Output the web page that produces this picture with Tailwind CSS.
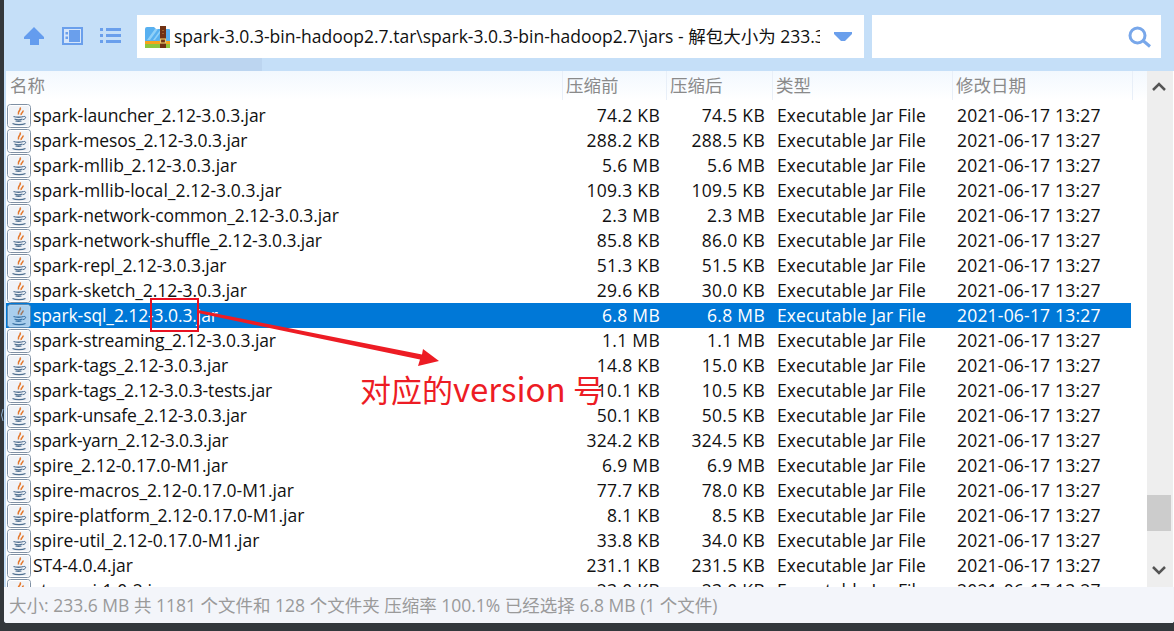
<!DOCTYPE html>
<html><head><meta charset="utf-8"><script src="https://cdn.jsdelivr.net/npm/@tailwindcss/browser@4"></script></head>
<body class="m-0 h-[631px] w-[1174px] overflow-hidden bg-[#33373b] font-['Open_Sans','Noto_Sans_CJK_SC',sans-serif] text-[17.5px]">
<svg class="hidden"><defs>
<symbol id="jar" viewBox="0 0 24 24"><rect x="0.5" y="0.5" width="23" height="23" rx="3" fill="#f1f3f7" stroke="#7f90a4"/><rect x="1.500" y="1.500" width="21" height="21" rx="2" fill="none" stroke="#ffffff"/><path d="M13 3.500c2 2.500-3 3.500-1.500 7M16 6.500c.5 2-2.500 2.500-1.800 4.500" stroke="#e4772b" stroke-width="1.600" fill="none"/><path d="M6.500 12.500c2 1 8 1 10 0M7.500 15c2 .8 6 .8 8 0M8.500 17c2 .6 4 .6 6 0M5.500 19.500c3 1.500 10 1.500 13 0" stroke="#4f6f90" stroke-width="1.300" fill="none"/><path d="M16.500 12.500c3-.8 3 2.500-.8 3.200" stroke="#4f6f90" fill="none"/></symbol>
</defs></svg>
<div class="relative ml-[4px] h-[623px] w-[1170px] overflow-hidden rounded-b-[3px] bg-[#c5dff8] pl-[2px]">
 <div class="absolute left-[176px] top-[58px] h-[13px] w-[82px] bg-[#bcd5f0]"></div>
 <div class="relative flex h-[71px] items-start">
  <div class="flex w-[131px] items-center gap-[17px] pl-[17px] pt-[27px]">
   <svg width="22" height="18" viewBox="0 0 22 18"><path d="M11 0 21 10v2h-5v6H7v-6H1v-2z" fill="#649cee"/></svg>
   <svg width="21" height="18" viewBox="0 0 21 18"><rect x="1" y="1" width="19" height="16" fill="#d5e5fa" stroke="#6a9fec" stroke-width="2"/><rect x="7" y="3" width="11" height="12" fill="#6a9fec"/><rect x="3.500" y="5" width="2.500" height="2.500" fill="#6a9fec"/><rect x="3.500" y="9.500" width="2.500" height="2.500" fill="#6a9fec"/></svg>
   <svg width="21" height="16" viewBox="0 0 21 16"><g fill="#6a9fec"><rect x="0" y="0" width="3" height="3"/><rect x="6" y="0" width="15" height="3"/><rect x="0" y="6" width="3" height="3"/><rect x="6" y="6" width="15" height="3"/><rect x="0" y="12" width="3" height="3"/><rect x="6" y="12" width="15" height="3"/></g></svg>
  </div>
  <div class="mt-[15px] flex h-[43px] w-[727px] items-center bg-white pl-[8px]">
   <svg width="25" height="22" viewBox="0 0 25 22" class="shrink-0"><path d="M0 3q0-2 2-2h7l2 2h13q1 0 1 1v11H0z" fill="#58b0f0"/><path d="M2 14 10 3h3L5 14zM8 14 16 3h2l-8 11z" fill="#8fd0f8"/><path d="M0 15h25v3H0z" fill="#f7a21b"/><path d="M0 18h25v4H0z" fill="#8cc63f"/><rect x="15" y="0" width="6" height="22" fill="#713214"/><rect x="15.500" y="13" width="5" height="4" fill="none" stroke="#e8c46a" stroke-width="1.200"/><path d="M18 4v6" stroke="#c9924a" stroke-dasharray="1 2"/></svg>
   <div class="ml-[4px] w-[646px] shrink-0 overflow-hidden whitespace-nowrap text-[#111]">spark-3.0.3-bin-hadoop2.7.tar\spark-3.0.3-bin-hadoop2.7\jars - 解包大小为 233.3 MB</div>
   <svg width="18" height="9" viewBox="0 0 18 9" class="ml-[14px]"><path d="M0 0h18v2l-7 7H7L0 2z" fill="#6a9fec"/></svg>
  </div>
  <div class="ml-[8px] mt-[15px] flex h-[43px] w-[289px] items-center justify-end bg-white pr-[9px]">
   <svg width="24" height="22" viewBox="0 0 24 22" fill="none" stroke="#78a7ea"><circle cx="9.500" cy="9.500" r="7.500" stroke-width="3"/><path d="M15.500 15 22 20.500" stroke-width="3"/></svg>
  </div>
 </div>
 <div class="relative flex h-[552px] bg-white">
  <div class="flex w-[1141px] flex-col">
   <div class="flex h-[29px] items-center bg-gradient-to-b from-[#f2f8fe] to-[#ffffff] text-[#8a8a8a]">
    <div class="h-full w-[557px] border-r border-[#e8eff8] pl-[4px] leading-[29px]">名称</div>
    <div class="h-full w-[104px] border-r border-[#e8eff8] pl-[3px] leading-[29px]">压缩前</div>
    <div class="h-full w-[106px] border-r border-[#e8eff8] pl-[3px] leading-[29px]">压缩后</div>
    <div class="h-full w-[180px] border-r border-[#e8eff8] pl-[3px] leading-[29px]">类型</div>
    <div class="h-full w-[180px] border-r border-[#e8eff8] pl-[3px] leading-[29px]">修改日期</div>
   </div>
   <div class="mt-[3px] flex h-[484px] w-[1125px] flex-col overflow-hidden text-[#111]">
    <div class="flex h-[25px] shrink-0 items-center"><svg width="24" height="24" class="ml-[1px] shrink-0"><use href="#jar"/></svg><span class="ml-[2px] w-[532px] tracking-[-0.1px]">spark-launcher_2.12-3.0.3.jar</span><span class="w-[95px] text-right tracking-[0.3px]">74.2 KB</span><span class="w-[105px] text-right tracking-[0.3px]">74.5 KB</span><span class="ml-[12px] w-[180px] tracking-[0.1px]">Executable Jar File</span><span class="tracking-[0.2px]">2021-06-17 13:27</span></div>
    <div class="flex h-[25px] shrink-0 items-center"><svg width="24" height="24" class="ml-[1px] shrink-0"><use href="#jar"/></svg><span class="ml-[2px] w-[532px] tracking-[-0.1px]">spark-mesos_2.12-3.0.3.jar</span><span class="w-[95px] text-right tracking-[0.3px]">288.2 KB</span><span class="w-[105px] text-right tracking-[0.3px]">288.5 KB</span><span class="ml-[12px] w-[180px] tracking-[0.1px]">Executable Jar File</span><span class="tracking-[0.2px]">2021-06-17 13:27</span></div>
    <div class="flex h-[25px] shrink-0 items-center"><svg width="24" height="24" class="ml-[1px] shrink-0"><use href="#jar"/></svg><span class="ml-[2px] w-[532px]">spark-mllib_2.12-3.0.3.jar</span><span class="w-[95px] text-right tracking-[0.3px]">5.6 MB</span><span class="w-[105px] text-right tracking-[0.3px]">5.6 MB</span><span class="ml-[12px] w-[180px] tracking-[0.1px]">Executable Jar File</span><span class="tracking-[0.2px]">2021-06-17 13:27</span></div>
    <div class="flex h-[25px] shrink-0 items-center"><svg width="24" height="24" class="ml-[1px] shrink-0"><use href="#jar"/></svg><span class="ml-[2px] w-[532px] tracking-[0.05px]">spark-mllib-local_2.12-3.0.3.jar</span><span class="w-[95px] text-right tracking-[0.3px]">109.3 KB</span><span class="w-[105px] text-right tracking-[0.3px]">109.5 KB</span><span class="ml-[12px] w-[180px] tracking-[0.1px]">Executable Jar File</span><span class="tracking-[0.2px]">2021-06-17 13:27</span></div>
    <div class="flex h-[25px] shrink-0 items-center"><svg width="24" height="24" class="ml-[1px] shrink-0"><use href="#jar"/></svg><span class="ml-[2px] w-[532px] tracking-[-0.1px]">spark-network-common_2.12-3.0.3.jar</span><span class="w-[95px] text-right tracking-[0.3px]">2.3 MB</span><span class="w-[105px] text-right tracking-[0.3px]">2.3 MB</span><span class="ml-[12px] w-[180px] tracking-[0.1px]">Executable Jar File</span><span class="tracking-[0.2px]">2021-06-17 13:27</span></div>
    <div class="flex h-[25px] shrink-0 items-center"><svg width="24" height="24" class="ml-[1px] shrink-0"><use href="#jar"/></svg><span class="ml-[2px] w-[532px] tracking-[-0.1px]">spark-network-shuffle_2.12-3.0.3.jar</span><span class="w-[95px] text-right tracking-[0.3px]">85.8 KB</span><span class="w-[105px] text-right tracking-[0.3px]">86.0 KB</span><span class="ml-[12px] w-[180px] tracking-[0.1px]">Executable Jar File</span><span class="tracking-[0.2px]">2021-06-17 13:27</span></div>
    <div class="flex h-[25px] shrink-0 items-center"><svg width="24" height="24" class="ml-[1px] shrink-0"><use href="#jar"/></svg><span class="ml-[2px] w-[532px] tracking-[-0.1px]">spark-repl_2.12-3.0.3.jar</span><span class="w-[95px] text-right tracking-[0.3px]">51.3 KB</span><span class="w-[105px] text-right tracking-[0.3px]">51.5 KB</span><span class="ml-[12px] w-[180px] tracking-[0.1px]">Executable Jar File</span><span class="tracking-[0.2px]">2021-06-17 13:27</span></div>
    <div class="flex h-[25px] shrink-0 items-center"><svg width="24" height="24" class="ml-[1px] shrink-0"><use href="#jar"/></svg><span class="ml-[2px] w-[532px] tracking-[-0.1px]">spark-sketch_2.12-3.0.3.jar</span><span class="w-[95px] text-right tracking-[0.3px]">29.6 KB</span><span class="w-[105px] text-right tracking-[0.3px]">30.0 KB</span><span class="ml-[12px] w-[180px] tracking-[0.1px]">Executable Jar File</span><span class="tracking-[0.2px]">2021-06-17 13:27</span></div>
    <div class="flex h-[25px] shrink-0 items-center bg-[#0078d7] text-white"><svg width="24" height="24" class="ml-[1px] shrink-0 opacity-70"><use href="#jar"/></svg><span class="ml-[2px] w-[532px] tracking-[-0.1px]">spark-sql_2.12-3.0.3.jar</span><span class="w-[95px] text-right tracking-[0.3px]">6.8 MB</span><span class="w-[105px] text-right tracking-[0.3px]">6.8 MB</span><span class="ml-[12px] w-[180px] tracking-[0.1px]">Executable Jar File</span><span class="tracking-[0.2px]">2021-06-17 13:27</span></div>
    <div class="flex h-[25px] shrink-0 items-center"><svg width="24" height="24" class="ml-[1px] shrink-0"><use href="#jar"/></svg><span class="ml-[2px] w-[532px] tracking-[-0.1px]">spark-streaming_2.12-3.0.3.jar</span><span class="w-[95px] text-right tracking-[0.3px]">1.1 MB</span><span class="w-[105px] text-right tracking-[0.3px]">1.1 MB</span><span class="ml-[12px] w-[180px] tracking-[0.1px]">Executable Jar File</span><span class="tracking-[0.2px]">2021-06-17 13:27</span></div>
    <div class="flex h-[25px] shrink-0 items-center"><svg width="24" height="24" class="ml-[1px] shrink-0"><use href="#jar"/></svg><span class="ml-[2px] w-[532px] tracking-[-0.1px]">spark-tags_2.12-3.0.3.jar</span><span class="w-[95px] text-right tracking-[0.3px]">14.8 KB</span><span class="w-[105px] text-right tracking-[0.3px]">15.0 KB</span><span class="ml-[12px] w-[180px] tracking-[0.1px]">Executable Jar File</span><span class="tracking-[0.2px]">2021-06-17 13:27</span></div>
    <div class="flex h-[25px] shrink-0 items-center"><svg width="24" height="24" class="ml-[1px] shrink-0"><use href="#jar"/></svg><span class="ml-[2px] w-[532px] tracking-[-0.1px]">spark-tags_2.12-3.0.3-tests.jar</span><span class="w-[95px] text-right tracking-[0.3px]">10.1 KB</span><span class="w-[105px] text-right tracking-[0.3px]">10.5 KB</span><span class="ml-[12px] w-[180px] tracking-[0.1px]">Executable Jar File</span><span class="tracking-[0.2px]">2021-06-17 13:27</span></div>
    <div class="flex h-[25px] shrink-0 items-center"><svg width="24" height="24" class="ml-[1px] shrink-0"><use href="#jar"/></svg><span class="ml-[2px] w-[532px] tracking-[-0.2px]">spark-unsafe_2.12-3.0.3.jar</span><span class="w-[95px] text-right tracking-[0.3px]">50.1 KB</span><span class="w-[105px] text-right tracking-[0.3px]">50.5 KB</span><span class="ml-[12px] w-[180px] tracking-[0.1px]">Executable Jar File</span><span class="tracking-[0.2px]">2021-06-17 13:27</span></div>
    <div class="flex h-[25px] shrink-0 items-center"><svg width="24" height="24" class="ml-[1px] shrink-0"><use href="#jar"/></svg><span class="ml-[2px] w-[532px] tracking-[-0.2px]">spark-yarn_2.12-3.0.3.jar</span><span class="w-[95px] text-right tracking-[0.3px]">324.2 KB</span><span class="w-[105px] text-right tracking-[0.3px]">324.5 KB</span><span class="ml-[12px] w-[180px] tracking-[0.1px]">Executable Jar File</span><span class="tracking-[0.2px]">2021-06-17 13:27</span></div>
    <div class="flex h-[25px] shrink-0 items-center"><svg width="24" height="24" class="ml-[1px] shrink-0"><use href="#jar"/></svg><span class="ml-[2px] w-[532px]">spire_2.12-0.17.0-M1.jar</span><span class="w-[95px] text-right tracking-[0.3px]">6.9 MB</span><span class="w-[105px] text-right tracking-[0.3px]">6.9 MB</span><span class="ml-[12px] w-[180px] tracking-[0.1px]">Executable Jar File</span><span class="tracking-[0.2px]">2021-06-17 13:27</span></div>
    <div class="flex h-[25px] shrink-0 items-center"><svg width="24" height="24" class="ml-[1px] shrink-0"><use href="#jar"/></svg><span class="ml-[2px] w-[532px]">spire-macros_2.12-0.17.0-M1.jar</span><span class="w-[95px] text-right tracking-[0.3px]">77.7 KB</span><span class="w-[105px] text-right tracking-[0.3px]">78.0 KB</span><span class="ml-[12px] w-[180px] tracking-[0.1px]">Executable Jar File</span><span class="tracking-[0.2px]">2021-06-17 13:27</span></div>
    <div class="flex h-[25px] shrink-0 items-center"><svg width="24" height="24" class="ml-[1px] shrink-0"><use href="#jar"/></svg><span class="ml-[2px] w-[532px]">spire-platform_2.12-0.17.0-M1.jar</span><span class="w-[95px] text-right tracking-[0.3px]">8.1 KB</span><span class="w-[105px] text-right tracking-[0.3px]">8.5 KB</span><span class="ml-[12px] w-[180px] tracking-[0.1px]">Executable Jar File</span><span class="tracking-[0.2px]">2021-06-17 13:27</span></div>
    <div class="flex h-[25px] shrink-0 items-center"><svg width="24" height="24" class="ml-[1px] shrink-0"><use href="#jar"/></svg><span class="ml-[2px] w-[532px]">spire-util_2.12-0.17.0-M1.jar</span><span class="w-[95px] text-right tracking-[0.3px]">33.8 KB</span><span class="w-[105px] text-right tracking-[0.3px]">34.0 KB</span><span class="ml-[12px] w-[180px] tracking-[0.1px]">Executable Jar File</span><span class="tracking-[0.2px]">2021-06-17 13:27</span></div>
    <div class="flex h-[25px] shrink-0 items-center"><svg width="24" height="24" class="ml-[1px] shrink-0"><use href="#jar"/></svg><span class="ml-[2px] w-[532px]">ST4-4.0.4.jar</span><span class="w-[95px] text-right tracking-[0.3px]">231.1 KB</span><span class="w-[105px] text-right tracking-[0.3px]">231.5 KB</span><span class="ml-[12px] w-[180px] tracking-[0.1px]">Executable Jar File</span><span class="tracking-[0.2px]">2021-06-17 13:27</span></div>
    <div class="flex h-[25px] shrink-0 items-center"><svg width="24" height="24" class="ml-[1px] shrink-0"><use href="#jar"/></svg><span class="ml-[2px] w-[532px]">stax-api-1.0-2.jar</span><span class="w-[95px] text-right tracking-[0.3px]">23.0 KB</span><span class="w-[105px] text-right tracking-[0.3px]">23.0 KB</span><span class="ml-[12px] w-[180px] tracking-[0.1px]">Executable Jar File</span><span class="tracking-[0.2px]">2021-06-17 13:27</span></div>
   </div>
  </div>
  <div class="relative flex w-[26px] flex-col items-center bg-[#eeeeee] pr-[2px]">
   <svg width="14" height="9" viewBox="0 0 14 9" class="mt-[11px]"><path d="M1 8l6-6 6 6" fill="none" stroke="#555" stroke-width="2.500"/></svg>
   <div class="absolute left-0 top-[424px] h-[36px] w-[24px] bg-[#cccccc]"></div>
   <svg width="14" height="9" viewBox="0 0 14 9" class="mb-[48px] mt-auto"><path d="M1 1l6 6 6-6" fill="none" stroke="#555" stroke-width="2.500"/></svg>
  </div>
 </div>
 <div class="absolute bottom-0 left-0 right-0 flex h-[36px] items-center whitespace-nowrap bg-[#f3f5fa] pl-[5px] text-[#9a9a9a]">大小: 233.6 MB 共 1181 个文件和 128 个文件夹 压缩率 100.1% 已经选择 6.8 MB (1 个文件)</div>
 <div class="absolute left-[146px] top-[298px] h-[34px] w-[49px] border-2 border-[#e81123]"></div>
 <svg class="pointer-events-none absolute left-0 top-0" width="1170" height="623"><path d="M194 310 418 354.500 419 349 435 361 414 366 416 359.500 194 313z" fill="#ed1c24"/></svg>
 <div class="absolute left-[356px] top-[367px] whitespace-nowrap text-[31px] leading-[42px] text-[#ed1c24] font-['Noto_Sans_CJK_SC','Open_Sans',sans-serif]">对应的<span class="text-[33px]">version </span>号</div>
</div>
<svg class="absolute left-0 top-[408px]" width="4" height="14" viewBox="0 0 4 14"><path d="M3 1Q0 7 3 13" fill="none" stroke="#8fb0d0"/></svg>
</body></html>
